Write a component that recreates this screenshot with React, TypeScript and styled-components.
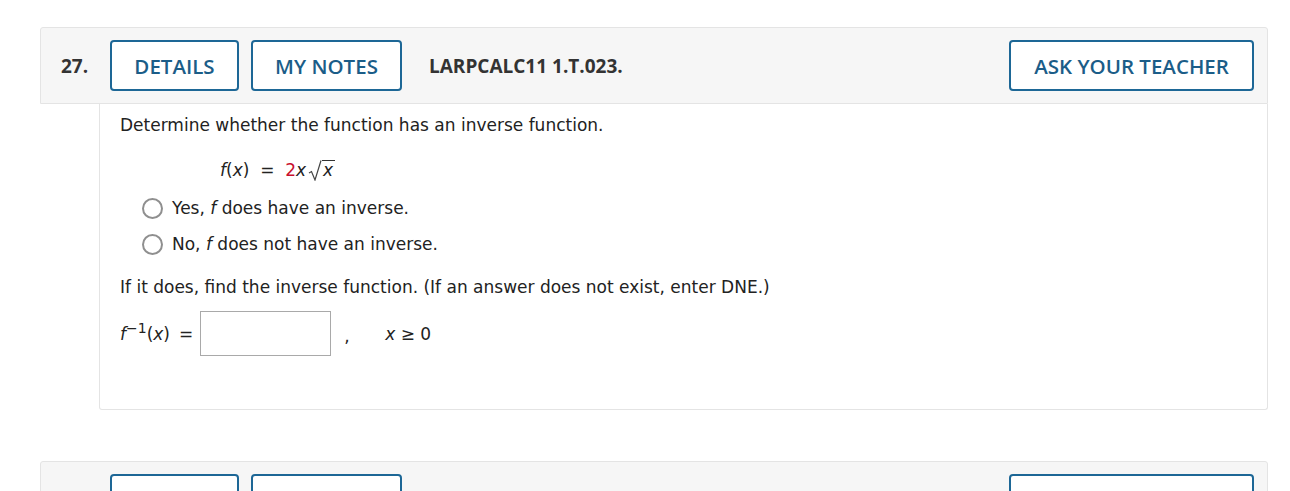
import * as React from "react";
import styled, { createGlobalStyle } from "styled-components";

const Global = createGlobalStyle`
  body {
    margin: 0;
    background: #fff;
    font-family: "DejaVu Sans", Verdana, sans-serif;
    color: #222;
    overflow: hidden;
  }
`;

const Page = styled.div`
  padding: 27px 22px 0 40px;
  display: flex;
  flex-direction: column;
  gap: 51px;
`;

const Question = styled.section`
  width: 1228px;
`;

const Header = styled.div`
  height: 75px;
  box-sizing: content-box;
  background: #f6f6f6;
  border: 1px solid #e4e4e4;
  border-radius: 3px 3px 0 0;
  display: flex;
  align-items: center;
  gap: 12px;
  padding: 0 13px 0 20px;
  font-family: "Open Sans", sans-serif;
`;

const Number = styled.span`
  font-size: 19px;
  font-weight: 700;
  color: #333;
  width: 37px;
`;

const HeaderButton = styled.button<{ $w: number }>`
  width: ${(p) => p.$w}px;
  height: 51px;
  border: 2px solid #1d6796;
  border-radius: 4px;
  background: #fff;
  color: #1b5d88;
  font-family: "Open Sans", sans-serif;
  font-size: 20.5px;
  font-weight: 600;
  padding: 0;
`;

const Code = styled.span`
  margin-left: 15px;
  font-size: 19px;
  font-weight: 700;
  color: #333;
  flex: 1;
`;

const Body = styled.div`
  margin-left: 59px;
  height: 306px;
  box-sizing: border-box;
  border: 1px solid #e4e4e4;
  border-top: none;
  border-radius: 0 0 3px 3px;
  padding: 10px 20px 0;
  font-size: 17px;
  line-height: 22px;
`;

const Prompt = styled.p`
  margin: 0;
`;

const Formula = styled.div`
  margin: 23px 0 0 100px;
  display: flex;
  align-items: center;
  height: 22px;
`;

const Fn = styled.span`
  font-style: italic;
`;

const Red = styled.span`
  color: #c8102e;
`;

const Radical = styled.span`
  display: inline-flex;
  align-items: flex-end;
  margin-left: 2px;
`;

const RootSign = styled.svg`
  width: 14px;
  height: 21px;
`;

const Radicand = styled.span`
  border-top: 1px solid #333;
  padding: 0 2px 0 1px;
  line-height: 19px;
  margin-bottom: 1px;
  font-style: italic;
`;

const Options = styled.div`
  margin: 16px 0 0 22px;
  display: flex;
  flex-direction: column;
  gap: 14px;
`;

const Option = styled.label`
  display: flex;
  align-items: center;
  gap: 9px;
`;

const Radio = styled.span`
  width: 17px;
  height: 17px;
  border: 2px solid #8f8f8f;
  border-radius: 50%;
  background: #fff;
`;

const Followup = styled.p`
  margin: 21px 0 0;
`;

const AnswerRow = styled.div`
  margin-top: 13px;
  display: flex;
  align-items: center;
`;

const Sup = styled.sup`
  font-style: normal;
  font-size: 14px;
  vertical-align: 7px;
  line-height: 0;
`;

const Eq = styled.span`
  margin: 0 7px 0 9px;
`;

const AnswerInput = styled.input`
  width: 131px;
  height: 45px;
  box-sizing: border-box;
  border: 1px solid #a9a9a9;
  margin: 0;
`;

const Comma = styled.span`
  margin: 4px 0 0 13px;
  width: 41px;
`;

const Domain = styled.span``;

const Item = ({ n, children }: { n: string; children?: React.ReactNode }) => (
  <Question>
    <Header>
      <Number>{n}</Number>
      <HeaderButton $w={129}>DETAILS</HeaderButton>
      <HeaderButton $w={151}>MY NOTES</HeaderButton>
      <Code>LARPCALC11 1.T.023.</Code>
      <HeaderButton $w={245}>ASK YOUR TEACHER</HeaderButton>
    </Header>
    {children}
  </Question>
);

export default function App() {
  return (
    <Page>
      <Global />
      <Item n="27.">
        <Body>
          <Prompt>Determine whether the function has an inverse function.</Prompt>
          <Formula>
            <Fn>f</Fn>(<Fn>x</Fn>)&nbsp; = &nbsp;<Red>2</Red>
            <Fn>x</Fn>
            <Radical>
              <RootSign viewBox="0 0 14 21">
                <path d="M1 13 L3.5 11.5 L7 20 L13 0.5" fill="none" stroke="#444" strokeWidth="1.2" />
              </RootSign>
              <Radicand>x</Radicand>
            </Radical>
          </Formula>
          <Options>
            <Option>
              <Radio />
              <span>
                Yes, <Fn>f</Fn> does have an inverse.
              </span>
            </Option>
            <Option>
              <Radio />
              <span>
                No, <Fn>f</Fn> does not have an inverse.
              </span>
            </Option>
          </Options>
          <Followup>If it does, find the inverse function. (If an answer does not exist, enter DNE.)</Followup>
          <AnswerRow>
            <span>
              <Fn>f</Fn>
              <Sup>−1</Sup>(<Fn>x</Fn>)
            </span>
            <Eq>=</Eq>
            <AnswerInput />
            <Comma>,</Comma>
            <Domain>
              <Fn>x</Fn> ≥ 0
            </Domain>
          </AnswerRow>
        </Body>
      </Item>
      <Item n="28." />
    </Page>
  );
}
